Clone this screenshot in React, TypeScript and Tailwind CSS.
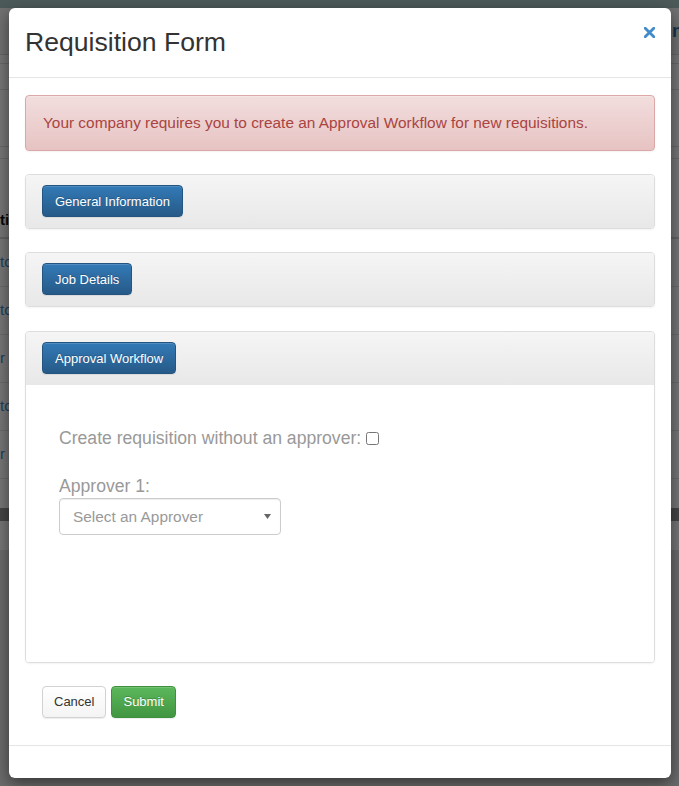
import React from "react";

function PrimaryBtn({ children }: { children: React.ReactNode }) {
  return (
    <button
      type="button"
      className="h-[32px] px-[12px] rounded-[4px] border border-[#245580] bg-linear-to-b from-[#337ab7] to-[#265a88] text-white text-[13px] leading-none [text-shadow:0_-1px_0_rgba(0,0,0,0.2)] shadow-[inset_0_1px_0_rgba(255,255,255,0.15),0_1px_1px_rgba(0,0,0,0.075)] flex items-center"
    >
      {children}
    </button>
  );
}

function Panel({ title, children }: { title: string; children?: React.ReactNode }) {
  return (
    <div className="border border-[#ddd] rounded-[4px] shadow-[0_1px_2px_rgba(0,0,0,0.05)] mb-[23px] overflow-hidden">
      <div className="px-[16px] pt-[10px] pb-[11px] bg-linear-to-b from-[#f5f5f5] to-[#e8e8e8] flex">
        <PrimaryBtn>{title}</PrimaryBtn>
      </div>
      {children}
    </div>
  );
}

function PageRow({ children }: { children?: React.ReactNode }) {
  return (
    <div className="h-[48px] border-b border-[#d4d4d4] flex items-center">
      <span className="text-[15px] text-[#3f7fbf]">{children}</span>
    </div>
  );
}

export default function App() {
  return (
    <div className="relative w-[679px] h-[786px] overflow-hidden bg-[#ececec] font-['Liberation_Sans',Arial,sans-serif]">
      {/* page behind the modal */}
      <div className="flex flex-col h-full">
        <div className="h-[8px] bg-[#9ab4b4]" />
        <div className="h-[47px] border-b border-[#cacaca] bg-[#e2e2e2] flex items-center justify-end overflow-hidden">
          <span className="text-[18px] font-bold text-[#33679c] whitespace-nowrap mr-[-10px]">nf</span>
        </div>
        <div className="h-[9px] border-b border-[#d0d0d0]" />
        <div className="h-[26px] border-b border-[#d0d0d0]" />
        <div className="h-[57px] border-b border-[#d0d0d0]" />
        <div className="h-[12px] border-b border-[#d0d0d0]" />
        <div className="h-[80px] border-b-2 border-[#c6c6c6] flex items-end pb-[6px]">
          <span className="text-[15px] font-bold text-[#111]">ti</span>
        </div>
        <PageRow>to</PageRow>
        <PageRow>to</PageRow>
        <PageRow>r</PageRow>
        <PageRow>to</PageRow>
        <PageRow>r</PageRow>
        <div className="h-[29px]" />
        <div className="h-[13px] bg-[#8a8a8a]" />
        <div className="h-[29px] bg-[#ececec]" />
        <div className="flex-1 bg-[#d6d6d6]" />
      </div>

      {/* backdrop + modal */}
      <div className="absolute inset-0 bg-black/50 pl-[9px] pt-[8px]">
        <div className="w-[662px] h-[770px] bg-white rounded-[6px] shadow-[0_5px_15px_rgba(0,0,0,0.5)] flex flex-col">
          {/* header */}
          <div className="h-[70px] px-[16px] pt-[16px] border-b border-[#e5e5e5] flex justify-between items-start">
            <h4 className="text-[26.6px] leading-[37px] text-[#333]">Requisition Form</h4>
            <button type="button" className="mt-[3px] w-[11px] h-[11px] flex">
              <svg width="11" height="11" viewBox="0 0 11 11">
                <path d="M1.2 1.2 L9.8 9.8 M9.8 1.2 L1.2 9.8" stroke="#428bca" strokeWidth="2.8" strokeLinecap="round" />
              </svg>
            </button>
          </div>

          {/* body */}
          <div className="px-[16px] pt-[17px] pb-[27px] flex flex-col">
            <div className="border border-[#dca7a7] rounded-[4px] bg-linear-to-b from-[#f2dede] to-[#e7c3c3] shadow-[inset_0_1px_0_rgba(255,255,255,0.25),0_1px_2px_rgba(0,0,0,0.05)] px-[17px] py-[16px] text-[15.4px] leading-[22px] text-[#a94442] mb-[23px]">
              Your company requires you to create an Approval Workflow for new requisitions.
            </div>

            <Panel title="General Information" />
            <Panel title="Job Details" />
            <div className="mt-[1px]">
              <Panel title="Approval Workflow">
                <div className="h-[277px] bg-white pl-[33px] pt-[41px]">
                  <div className="flex items-center text-[17.6px] leading-[25px] text-[#999]">
                    <span>Create requisition without an approver:</span>
                    <input type="checkbox" className="ml-[5px] w-[13px] h-[13px] m-0" />
                  </div>
                  <div className="mt-[23px] text-[17.6px] leading-[24px] text-[#999]">Approver 1:</div>
                  <div className="w-[222px] h-[37px] border border-[#ccc] rounded-[4px] shadow-[inset_0_1px_1px_rgba(0,0,0,0.075)] flex items-center justify-between pl-[13px] pr-[9px]">
                    <span className="text-[15.4px] text-[#999]">Select an Approver</span>
                    <svg width="7" height="5" viewBox="0 0 7 5">
                      <path d="M0 0 L7 0 L3.5 5 Z" fill="#666" />
                    </svg>
                  </div>
                </div>
              </Panel>
            </div>

            <div className="flex gap-[5px] pl-[17px]">
              <button
                type="button"
                className="h-[32px] px-[11px] rounded-[4px] border border-[#d2d2d2] bg-linear-to-b from-white to-[#f4f4f4] text-[#333] text-[13px] shadow-[0_1px_1px_rgba(0,0,0,0.075)] flex items-center"
              >
                Cancel
              </button>
              <button
                type="button"
                className="h-[32px] px-[11px] rounded-[4px] border border-[#3e8f3e] bg-linear-to-b from-[#5cb85c] to-[#419641] text-white text-[13px] [text-shadow:0_-1px_0_rgba(0,0,0,0.2)] shadow-[inset_0_1px_0_rgba(255,255,255,0.15),0_1px_1px_rgba(0,0,0,0.075)] flex items-center"
              >
                Submit
              </button>
            </div>
          </div>

          {/* footer */}
          <div className="h-[33px] border-t border-[#e5e5e5]" />
        </div>
      </div>
    </div>
  );
}
